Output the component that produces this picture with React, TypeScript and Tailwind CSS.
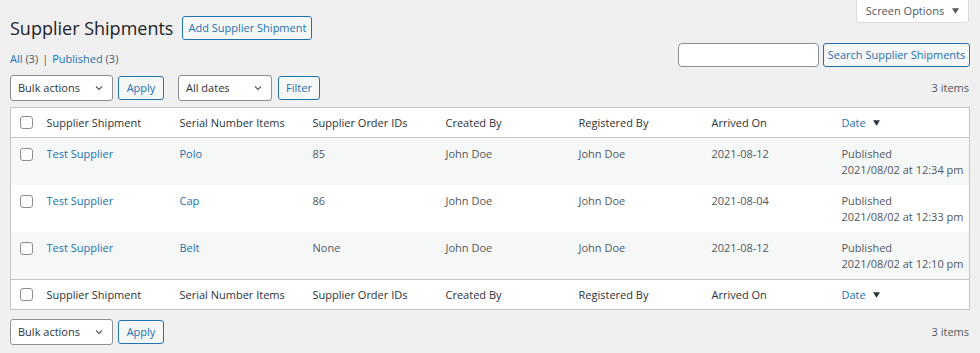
const rows = [
  { name: 'Test Supplier', item: 'Polo', order: '85', created: 'John Doe', registered: 'John Doe', arrived: '2021-08-12', date: '2021/08/02 at 12:34 pm' },
  { name: 'Test Supplier', item: 'Cap', order: '86', created: 'John Doe', registered: 'John Doe', arrived: '2021-08-04', date: '2021/08/02 at 12:33 pm' },
  { name: 'Test Supplier', item: 'Belt', order: 'None', created: 'John Doe', registered: 'John Doe', arrived: '2021-08-12', date: '2021/08/02 at 12:10 pm' },
];

function Checkbox() {
  return <span className="block h-[13px] w-[13px] rounded-[3px] border border-[#8c8f94] bg-white" />;
}

function Chevron() {
  return (
    <svg width="10" height="10" viewBox="0 0 20 20" className="text-[#50575e]">
      <path d="M4 7l6 6 6-6" fill="none" stroke="currentColor" strokeWidth="2.2" />
    </svg>
  );
}

function Select({ label, width }: { label: string; width: string }) {
  return (
    <div className={`flex h-[26px] items-center justify-between rounded-[3px] border border-[#8c8f94] bg-white pl-[7px] pr-[8px] text-[#2c3338] ${width}`}>
      <span>{label}</span>
      <Chevron />
    </div>
  );
}

function Button({ children, className = '' }: { children: React.ReactNode; className?: string }) {
  return (
    <button className={`flex h-[24px] items-center justify-center rounded-[3px] border border-[#2271b1] bg-[#f6f7f7] text-[#2271b1] ${className}`}>
      {children}
    </button>
  );
}

function BulkNav({ filters }: { filters?: boolean }) {
  return (
    <div className="flex h-[26px] items-center justify-between">
      <div className="flex items-center">
        <Select label="Bulk actions" width="w-[103px]" />
        <Button className="ml-[5px] w-[46px]">Apply</Button>
        {filters && (
          <>
            <div className="ml-[14px]">
              <Select label="All dates" width="w-[94px]" />
            </div>
            <Button className="ml-[6px] w-[42px]">Filter</Button>
          </>
        )}
      </div>
      <span className="pr-[1px] text-[#50575e]">3 items</span>
    </div>
  );
}

function HeaderRow({ top }: { top?: boolean }) {
  const cols = ['Supplier Shipment', 'Serial Number Items', 'Supplier Order IDs', 'Created By', 'Registered By', 'Arrived On'];
  return (
    <tr className={`h-[30px] bg-white ${top ? 'border-b' : 'border-t'} border-[#c3c4c7]`}>
      <td className="pl-[9px] align-middle"><Checkbox /></td>
      {cols.map((c, i) => (
        <th key={c} className={`${i < 3 ? 'pl-[8px]' : 'pl-[9px]'} text-left align-middle font-normal text-[#2c3338]`}>{c}</th>
      ))}
      <th className="pl-[8px] text-left align-middle font-normal text-[#2271b1]">
        <span className="inline-flex items-center gap-[7px]">
          Date
          <svg width="7" height="6" viewBox="0 0 10 8"><path d="M0 0h10L5 8z" fill="#2c3338" /></svg>
        </span>
      </th>
    </tr>
  );
}

export default function App() {
  return (
    <div className="relative min-h-screen bg-[#f0f0f1] px-[10px] text-[11px] leading-[16px] text-[#50575e] font-['Open_Sans',sans-serif]">
      <div className="absolute right-[11px] top-0 flex h-[23px] w-[113px] items-center justify-center gap-[8px] rounded-b-[3px] border border-t-0 border-[#dcdcde] bg-white text-[#50575e]">
        Screen Options
        <svg width="7" height="6" viewBox="0 0 10 8"><path d="M0 0h10L5 8z" fill="#50575e" /></svg>
      </div>

      <div className="flex items-center pt-[16px]">
        <h1 className="text-[18px] leading-[24px] text-[#1d2327]">Supplier Shipments</h1>
        <Button className="ml-[9px] w-[130px] font-medium">Add Supplier Shipment</Button>
      </div>

      <div className="mt-[3px] flex items-start justify-between">
        <div className="mt-[8px] text-[#2271b1]">
          All <span className="text-[#50575e]">(3)</span>
          <span className="mx-[4px] text-[#50575e]">|</span>
          Published <span className="text-[#50575e]">(3)</span>
        </div>
        <div className="flex items-center">
          <div className="h-[24px] w-[141px] rounded-[4px] border border-[#8c8f94] bg-white" />
          <Button className="ml-[4px] w-[147px]">Search Supplier Shipments</Button>
        </div>
      </div>

      <div className="mt-[8px]">
        <BulkNav filters />
      </div>

      <table className="mt-[6px] w-full table-fixed border-collapse border border-[#c3c4c7] bg-white">
        <colgroup>
          <col className="w-[28px]" />
          <col className="w-[133px]" />
          <col className="w-[133px]" />
          <col className="w-[132px]" />
          <col className="w-[133px]" />
          <col className="w-[133px]" />
          <col className="w-[131px]" />
          <col />
        </colgroup>
        <thead>
          <HeaderRow top />
        </thead>
        <tbody>
          {rows.map((r, i) => (
            <tr key={i} className={i % 2 === 0 ? 'bg-[#f6f7f7]' : 'bg-white'}>
              <td className="pl-[9px] pt-[10px] align-top"><Checkbox /></td>
              <td className="pl-[8px] pt-[8px] pb-[7px] align-top text-[#2271b1]">{r.name}</td>
              <td className="pl-[8px] pt-[8px] align-top text-[#2271b1]">{r.item}</td>
              <td className="pl-[8px] pt-[8px] align-top">{r.order}</td>
              <td className="pl-[9px] pt-[8px] align-top">{r.created}</td>
              <td className="pl-[9px] pt-[8px] align-top">{r.registered}</td>
              <td className="pl-[9px] pt-[8px] align-top">{r.arrived}</td>
              <td className="pl-[8px] pt-[8px] pb-[7px] align-top">
                <div>Published</div>
                <div>{r.date}</div>
              </td>
            </tr>
          ))}
        </tbody>
        <tfoot>
          <HeaderRow />
        </tfoot>
      </table>

      <div className="mt-[9px]">
        <BulkNav />
      </div>
    </div>
  );
}
